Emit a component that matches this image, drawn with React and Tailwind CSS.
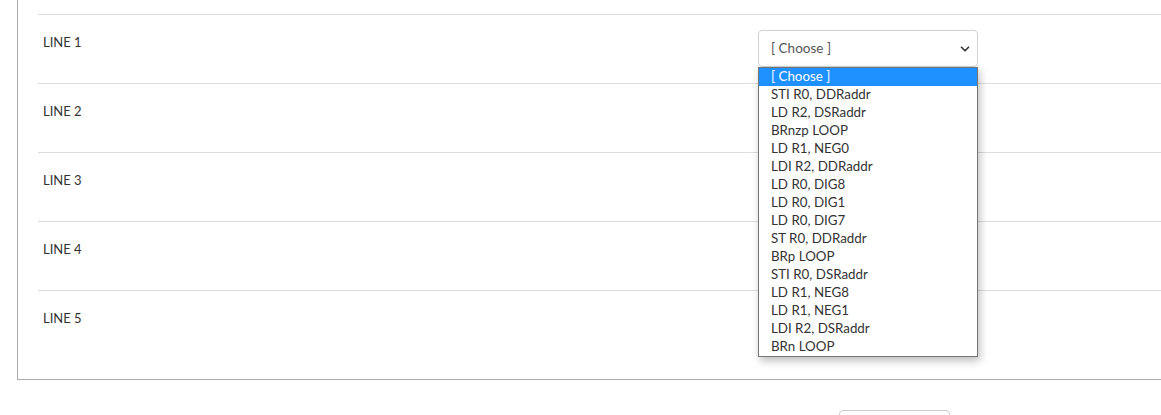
import { ChevronDown } from 'lucide-react'

const options = [
  '[ Choose ]',
  'STI R0, DDRaddr',
  'LD R2, DSRaddr',
  'BRnzp LOOP',
  'LD R1, NEG0',
  'LDI R2, DDRaddr',
  'LD R0, DIG8',
  'LD R0, DIG1',
  'LD R0, DIG7',
  'ST R0, DDRaddr',
  'BRp LOOP',
  'STI R0, DSRaddr',
  'LD R1, NEG8',
  'LD R1, NEG1',
  'LDI R2, DSRaddr',
  'BRn LOOP',
]

const lines = ['LINE 1', 'LINE 2', 'LINE 3', 'LINE 4', 'LINE 5']

function Select({ open }) {
  return (
    <div className="relative w-[220px]">
      <div className="h-[37px] flex items-center justify-between pl-[12px] pr-[5px] border border-[#d2d2d2] rounded-[4px] bg-white text-[13.5px] text-[#555]">
        <span>[ Choose ]</span>
        <ChevronDown size={14} strokeWidth={3} className="text-[#343a40]" />
      </div>
      {open && (
        <div className="absolute left-0 top-[37px] w-[220px] bg-white border border-[#767676] shadow-[2px_4px_8px_rgba(0,0,0,0.25)] z-10">
          {options.map((o, i) => (
            <div
              key={o}
              className={`h-[18px] leading-[17px] pl-[12px] text-[13.33px] ${i === 0 ? 'bg-[#1e90ff] text-white' : 'text-[#333]'}`}
            >
              {o}
            </div>
          ))}
        </div>
      )}
    </div>
  )
}

export default function App() {
  return (
    <div className="w-[1161px] h-[415px] overflow-hidden bg-white font-['Lato','Open_Sans',sans-serif]">
      <div className="ml-[17px] border-l border-b border-[#aaa] pt-[14px] pl-[20px] pb-[20px]">
        {lines.map((l, i) => (
          <div key={l} className="h-[69px] border-t border-[#ddd] flex items-start">
            <div className="w-[720px] pl-[5px] pt-[18px] text-[13px] text-[#333]">{l}</div>
            <div className="pt-[15px]">{i === 0 ? <Select open /> : null}</div>
          </div>
        ))}
      </div>
      <div className="mt-[30px] ml-[839px] w-[111px] h-[36px] border border-[#ccc] rounded-[4px]" />
    </div>
  )
}
